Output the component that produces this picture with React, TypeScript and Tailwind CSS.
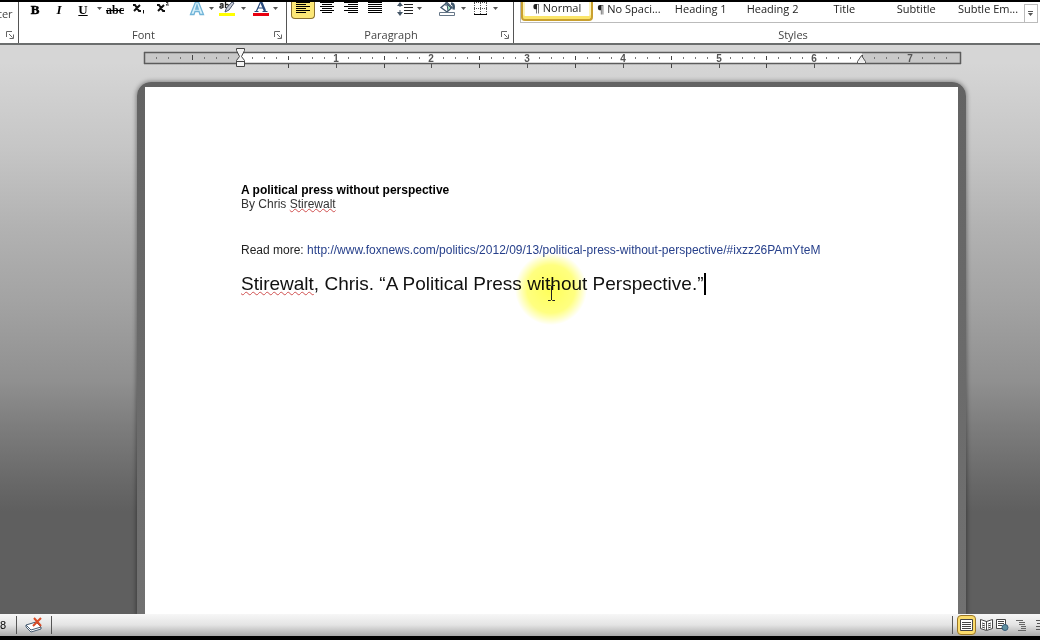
import type { ReactNode } from "react";

function Caret() {
  return (
    <svg width="5" height="3" viewBox="0 0 5 3" className="shrink-0" aria-hidden="true">
      <path d="M0 0h5L2.500 3z" fill="#555" />
    </svg>
  );
}

function Tool({ label, className, children }: { label: string; className: string; children: ReactNode }) {
  return (
    <button type="button" aria-label={label} className={`-mt-1 flex h-5 shrink-0 items-center justify-center ${className}`}>
      {children}
    </button>
  );
}

function Launcher({ label }: { label: string }) {
  return (
    <button type="button" aria-label={label} className="shrink-0">
      <svg width="8" height="8" viewBox="0 0 8 8" fill="none" stroke="#666" aria-hidden="true">
        <path d="M.5 6V.5H6M3 3l3.500 3.500M7.500 3.500v4h-4" />
      </svg>
    </button>
  );
}

function Lines({ rows }: { rows: [number, number][] }) {
  return (
    <svg width="16" height="14" viewBox="0 0 16 14" stroke="#000" aria-hidden="true">
      {rows.map(([a, b], i) => (
        <path key={i} d={`M${a} ${i * 2 + 1.5}H${b}`} />
      ))}
    </svg>
  );
}

function GroupFooter({ name }: { name: string }) {
  return (
    <div className="flex h-4 items-center pr-1">
      <span className="flex-1 pr-1.5 text-center font-medium">{name}</span>
      <Launcher label={`${name} settings`} />
    </div>
  );
}

function FontGroup() {
  return (
    <section className="flex w-[268px] shrink-0 flex-col justify-between border-r border-[#555]">
      <div className="flex h-5 items-start pl-1 font-['Liberation_Serif',serif] text-[13px] leading-3 text-black">
        <Tool label="Bold" className="w-6 pt-1"><b className="[-webkit-text-stroke:0.5px_black]">B</b></Tool>
        <Tool label="Italic" className="w-6 pt-1"><b><i>I</i></b></Tool>
        <Tool label="Underline" className="w-6 pt-1"><b className="underline">U</b></Tool>
        <Tool label="Underline style" className="w-2"><Caret /></Tool>
        <Tool label="Strikethrough" className="w-6 pt-1 text-xs leading-3"><b className="line-through">abc</b></Tool>
        <Tool label="Subscript" className="w-6">
          <svg width="14" height="14" viewBox="0 0 14 14" fill="none" stroke="#111" aria-hidden="true">
            <path d="M1 4h2l4 6h2M8 4L2 10" strokeWidth="2" /><path d="M11.500 9v3.500" />
          </svg>
        </Tool>
        <Tool label="Superscript" className="w-6">
          <svg width="14" height="14" viewBox="0 0 14 14" fill="none" stroke="#111" aria-hidden="true">
            <path d="M1 4h2l4 6h2M8 4L2 10" strokeWidth="2" /><path d="M10 1.500h2v1l-2 1.500h3" strokeWidth=".8" />
          </svg>
        </Tool>
        <Tool label="Text effects" className="ml-3 w-5">
          <svg width="16" height="16" viewBox="0 0 16 16" fill="none" aria-hidden="true">
            <path d="M1.500 14.500L6.500 2h3l5 12.500h-3.500l-1-3H6l-1 3zM6.800 9h2.400L8 5z" fill="#d9f1fa" stroke="#71b4d8" strokeWidth="1.300" />
          </svg>
        </Tool>
        <Tool label="Text effects menu" className="w-2"><Caret /></Tool>
        <Tool label="Highlight" className="w-6">
          <svg width="18" height="18" viewBox="0 0 18 18" fill="none" aria-hidden="true">
            <path d="M2 5.500c1-1 3-1 3 0V9M5 7C3 6.500 1.500 7.500 2 8.500s2.500.5 3-.5M7.500 2v7M7.500 6c1-1 3-1 3 1s-2 2.500-3 1" stroke="#222" strokeWidth="1.300" />
            <path d="M16 4l-5 7-4 2 1.500-4L14 3z" fill="#c9ced8" stroke="#4c5870" />
            <path d="M1 14h16v3H1z" fill="#ff0" />
          </svg>
        </Tool>
        <Tool label="Highlight colours" className="w-2"><Caret /></Tool>
        <Tool label="Font colour" className="ml-1 w-5">
          <svg width="18" height="18" viewBox="0 0 18 18" fill="none" aria-hidden="true">
            <path d="M4.500 12L9 2M6 9h6M2.500 12.500h4M10.500 12.500h5" stroke="#294b7d" strokeWidth="1.200" />
            <path d="M9 2.500l4 9.500" stroke="#294b7d" strokeWidth="2.300" />
            <path d="M1 14h16v3H1z" fill="#e80010" />
          </svg>
        </Tool>
        <Tool label="Font colours" className="w-2"><Caret /></Tool>
      </div>
      <GroupFooter name="Font" />
    </section>
  );
}

function ParagraphGroup() {
  return (
    <section className="flex w-[227px] shrink-0 flex-col justify-between border-r border-[#555]">
      <div className="flex h-5 items-start pl-1">
        <div className="h-[17px] w-6 overflow-hidden rounded-b-sm border border-t-0 border-[#8a7030] bg-[#fce776]">
          <Tool label="Align left" className="w-full"><Lines rows={[[1, 15], [1, 11], [1, 15], [1, 11], [1, 15], [1, 11]]} /></Tool>
        </div>
        <Tool label="Centre" className="w-6"><Lines rows={[[1, 15], [3, 13], [1, 15], [3, 13], [1, 15], [3, 13]]} /></Tool>
        <Tool label="Align right" className="w-6"><Lines rows={[[1, 15], [5, 15], [1, 15], [5, 15], [1, 15], [5, 15]]} /></Tool>
        <Tool label="Justify" className="w-6"><Lines rows={[[1, 15], [1, 15], [1, 15], [1, 15], [1, 15], [1, 15]]} /></Tool>
        <Tool label="Line spacing" className="ml-2 w-5">
          <svg width="16" height="16" viewBox="0 0 16 16" fill="none" stroke="#222" aria-hidden="true">
            <path d="M7 4.500h9M7 7.500h9M7 10.500h9M7 13.500h9" /><path d="M3 3v4M3 10v4" stroke="#456" />
            <path d="M0 6l3-4 3 4zM0 12l3 4 3-4z" fill="#456" stroke="none" />
          </svg>
        </Tool>
        <Tool label="Line spacing menu" className="w-2"><Caret /></Tool>
        <Tool label="Shading" className="ml-3 w-6">
          <svg width="18" height="18" viewBox="0 0 18 18" fill="none" stroke="#3f566b" aria-hidden="true">
            <path d="M3 8.500l6-5 5 5-5 4.500z" fill="#fff" strokeWidth="1.300" /><path d="M8 1v6M9 5l4 4-3 3z" fill="#9db" /><path d="M13 4.500c3 0 3 3 2.500 6" strokeWidth="2.500" /><path d="M1.500 13.500h15v3h-15z" fill="#fff" stroke="#678" />
          </svg>
        </Tool>
        <Tool label="Shading colours" className="w-2"><Caret /></Tool>
        <Tool label="Borders" className="ml-1 w-5">
          <svg width="14" height="16" viewBox="0 0 14 16" fill="none" stroke="#555" aria-hidden="true">
            <path d="M.5 1v13M6.500 1v13M12.500 1v13M0 2.500h13M0 8.500h13" strokeDasharray="1 1" /><path d="M0 14.500h13" stroke="#000" />
          </svg>
        </Tool>
        <Tool label="Borders menu" className="w-2"><Caret /></Tool>
      </div>
      <GroupFooter name="Paragraph" />
    </section>
  );
}

const styleNames = ["¶ No Spaci...", "Heading 1", "Heading 2", "Title", "Subtitle", "Subtle Em..."];

function StylesGroup() {
  return (
    <section className="flex min-w-0 flex-1 flex-col justify-between pr-0.5 pl-[6px]">
      <div className="flex h-[21px] border-b border-l border-[#bbb] text-[#222]">
        <button type="button" className="h-[19px] w-[72px] shrink-0 rounded-b-sm border-2 border-t-0 border-[#c9a02f] bg-white pb-1.5 leading-3 shadow-[inset_0_-3px_0_#fbe56a,inset_2px_0_0_#fdf3b8,inset_-2px_0_0_#fdf3b8]">
          ¶ Normal
        </button>
        {styleNames.map((name) => (
          <button key={name} type="button" className="h-[19px] min-w-0 flex-1 pb-1.5 text-center leading-3 whitespace-nowrap">
            {name}
          </button>
        ))}
        <button type="button" aria-label="More styles" className="mt-0.5 flex w-[14px] shrink-0 flex-col items-center justify-center gap-px border-x border-t border-[#bbb]">
          <span className="h-px w-[5px] bg-[#555]" />
          <Caret />
        </button>
      </div>
      <div className="flex h-4 items-center justify-center pl-7 font-medium">Styles</div>
    </section>
  );
}

const INCH = 95.7;

function Ruler() {
  const eighths = Array.from({ length: 67 }, (_, i) => i - 7).filter((i) => i !== 0);
  return (
    <svg width="820" height="22" viewBox="0 0 820 22" fill="none" aria-label="Ruler" className="block shrink-0">
      <path d="M1.500 4.500h816v11h-816z" fill="#c9c9c9" stroke="#666" />
      <path d="M97 5h622v10H97z" fill="#fff" />
      <path d="M1 4.500h817M1 15.500h817M1.500 4v12M817.500 4v12" stroke="#5c5c5c" strokeWidth="1.500" />
      {eighths.map((i) => {
        const x = Math.round(97 + (i * INCH) / 8);
        if (i % 8 === 0) {
          return (
            <g key={i}>
              <text x={x} y="14" textAnchor="middle" fontSize="10" fontWeight="bold" fill="#555">{i / 8}</text>
              {i < 52 && <path d={`M${x}.500 16v4`} stroke="#555" />}
            </g>
          );
        }
        if (i % 4 === 0) {
          return <path key={i} d={i > 0 && i < 52 ? `M${x}.500 8v4M${x}.500 16v4` : `M${x}.500 7v5`} stroke="#444" />;
        }
        return <path key={i} d={`M${x}.500 9v2`} stroke="#777" />;
      })}
      <path d="M93.500.500h8v2l-3 6 3 4v6h-8v-6l3-4-3-6z" fill="#f4f4f4" stroke="#444" />
      <path d="M93 13.500h9" stroke="#444" />
      <path d="M714.500 15.500v-2l4-6 4 6v2z" fill="#eee" stroke="#555" />
    </svg>
  );
}

function Page() {
  return (
    <div className="min-h-0 flex-1 rounded-t-[14px] bg-linear-to-b from-[#636363] to-[#717171] px-2 pt-[5px] shadow-[0_0_4px_1px_#0000005c]">
      <main className="h-full bg-white pt-[96px] pl-24 text-xs leading-[14px] text-[#333]">
        <h1 className="font-bold text-black">A political press without perspective</h1>
        <p>
          By Chris <span className="underline decoration-[#d05050] decoration-wavy decoration-1 underline-offset-0">Stirewalt</span>
        </p>
        <p className="mt-8 whitespace-nowrap text-[#222]">
          Read more:{" "}
          <a href="#ixzz26PAmYteM" className="text-[#27408b]">
            http://www.foxnews.com/politics/2012/09/13/political-press-without-perspective/#ixzz26PAmYteM
          </a>
        </p>
        <p className="mt-4 flex items-center text-[19px] leading-[22px] whitespace-nowrap text-[#111]">
          <span className="underline decoration-[#d05050] decoration-wavy decoration-1 underline-offset-1">Stirewalt</span>
          <span className="whitespace-pre">, Chris. “A Political Press </span>
          <span className="relative">
            without
            <span className="absolute -top-6 -left-4 size-20 rounded-full bg-[radial-gradient(closest-side,#ffff58_0%,#ffff80_60%,#ffffff_90%)] mix-blend-multiply" />
            <svg width="9" height="16" viewBox="0 0 9 16" fill="none" stroke="#222" className="absolute top-3 left-5" aria-hidden="true">
              <path d="M1 .5h2.500l1 1 1-1H8M4.500 1v14M1 15.500h2.500l1-1 1 1H8" />
            </svg>
          </span>
          <span className="whitespace-pre"> Perspective.”</span>
          <span className="h-[22px] w-[2px] bg-black" />
        </p>
      </main>
    </div>
  );
}

function StatusBar() {
  return (
    <footer className="flex h-[22px] shrink-0 items-center bg-linear-to-b from-[#f7f7f7] via-[#e4e4e4] to-[#aaa] text-[11px]">
      <span className="w-4">8</span>
      <span className="h-[18px] w-px bg-[#555]" />
      <button type="button" aria-label="Proofing errors" className="flex w-[34px] justify-center">
        <svg width="18" height="16" viewBox="0 0 18 16" fill="none" aria-hidden="true">
          <path d="M1 8l5 5 10-3-5-5zM1 8v2l5 5 10-3v-2" fill="#fff" stroke="#455a70" />
          <path d="M9 1l7 8M16 1L8 9" stroke="#d94b25" strokeWidth="2" />
        </svg>
      </button>
      <span className="h-[18px] w-px bg-[#555]" />
      <span className="flex-1" />
      <span className="h-[18px] w-px bg-[#555]" />
      <button type="button" aria-label="Print layout" className="ml-1 flex h-5 w-[19px] items-center justify-center rounded-sm border border-[#9a7626] bg-[#fbdc6b]">
        <svg width="13" height="12" viewBox="0 0 13 12" fill="#fff" stroke="#444" aria-hidden="true"><path d="M.5.5h12v11H.5zM2 3.500h9M2 5.500h9M2 7.500h9M2 9.500h9" /></svg>
      </button>
      <button type="button" aria-label="Full screen reading" className="ml-1 w-4">
        <svg width="13" height="12" viewBox="0 0 13 12" fill="#fff" stroke="#444" aria-hidden="true"><path d="M.5.5l6 2 6-2v9l-6 2-6-2zM6.500 2v9M2 4l3 1M2 6l3 1M2 8l3 1M11 4L8 5M11 6L8 7M11 8L8 9" /></svg>
      </button>
      <button type="button" aria-label="Web layout" className="w-5">
        <svg width="13" height="12" viewBox="0 0 13 12" fill="#fff" stroke="#444" aria-hidden="true"><path d="M.5.5h9v9h-9zM2 2.500h6M2 4.500h6M2 6.500h4" /><circle cx="9" cy="8.500" r="3" fill="#5f8f9e" stroke="#355a78" /></svg>
      </button>
      <button type="button" aria-label="Outline" className="w-5">
        <svg width="11" height="12" viewBox="0 0 11 12" stroke="#666" aria-hidden="true"><path d="M0 1.500h7M3 3.500h6M3 5.500h6M5 7.500h5M5 9.500h5M2 11.500h8" /></svg>
      </button>
      <button type="button" aria-label="Draft" className="w-1 overflow-hidden">
        <svg width="11" height="12" viewBox="0 0 11 12" stroke="#555" aria-hidden="true"><path d="M0 1.500h10M1 4.500h9M0 7.500h9M0 10.500h9" /></svg>
      </button>
    </footer>
  );
}

export default function App() {
  return (
    <div className="flex h-screen flex-col overflow-hidden border-t-2 border-b-4 border-black bg-black font-['Liberation_Sans',Arial,sans-serif]">
      <header className="flex h-[43px] shrink-0 overflow-hidden border-b-2 border-[#6b6e6e] bg-white font-['Open_Sans',sans-serif] text-[11px] text-[#444]">
        <section className="flex w-[19px] shrink-0 flex-col justify-between border-r border-[#555]">
          <span className="mt-1 -ml-0.5 leading-4">ter</span>
          <div className="flex h-4 items-center justify-end pr-1"><Launcher label="Clipboard settings" /></div>
        </section>
        <FontGroup />
        <ParagraphGroup />
        <StylesGroup />
      </header>
      <div className="flex min-h-0 flex-1 flex-col bg-[linear-gradient(#d6d6d6_3%,#c6c6c6_18%,#b2b2b2_32%,#a3a3a3_45%,#909090_59%,#7d7d7d_67%,#686868_77%,#5f5f5f_82%)] pt-[3px] pr-[74px] pl-[137px]">
        <div className="mb-3 pl-[6px]"><Ruler /></div>
        <Page />
      </div>
      <StatusBar />
    </div>
  );
}
